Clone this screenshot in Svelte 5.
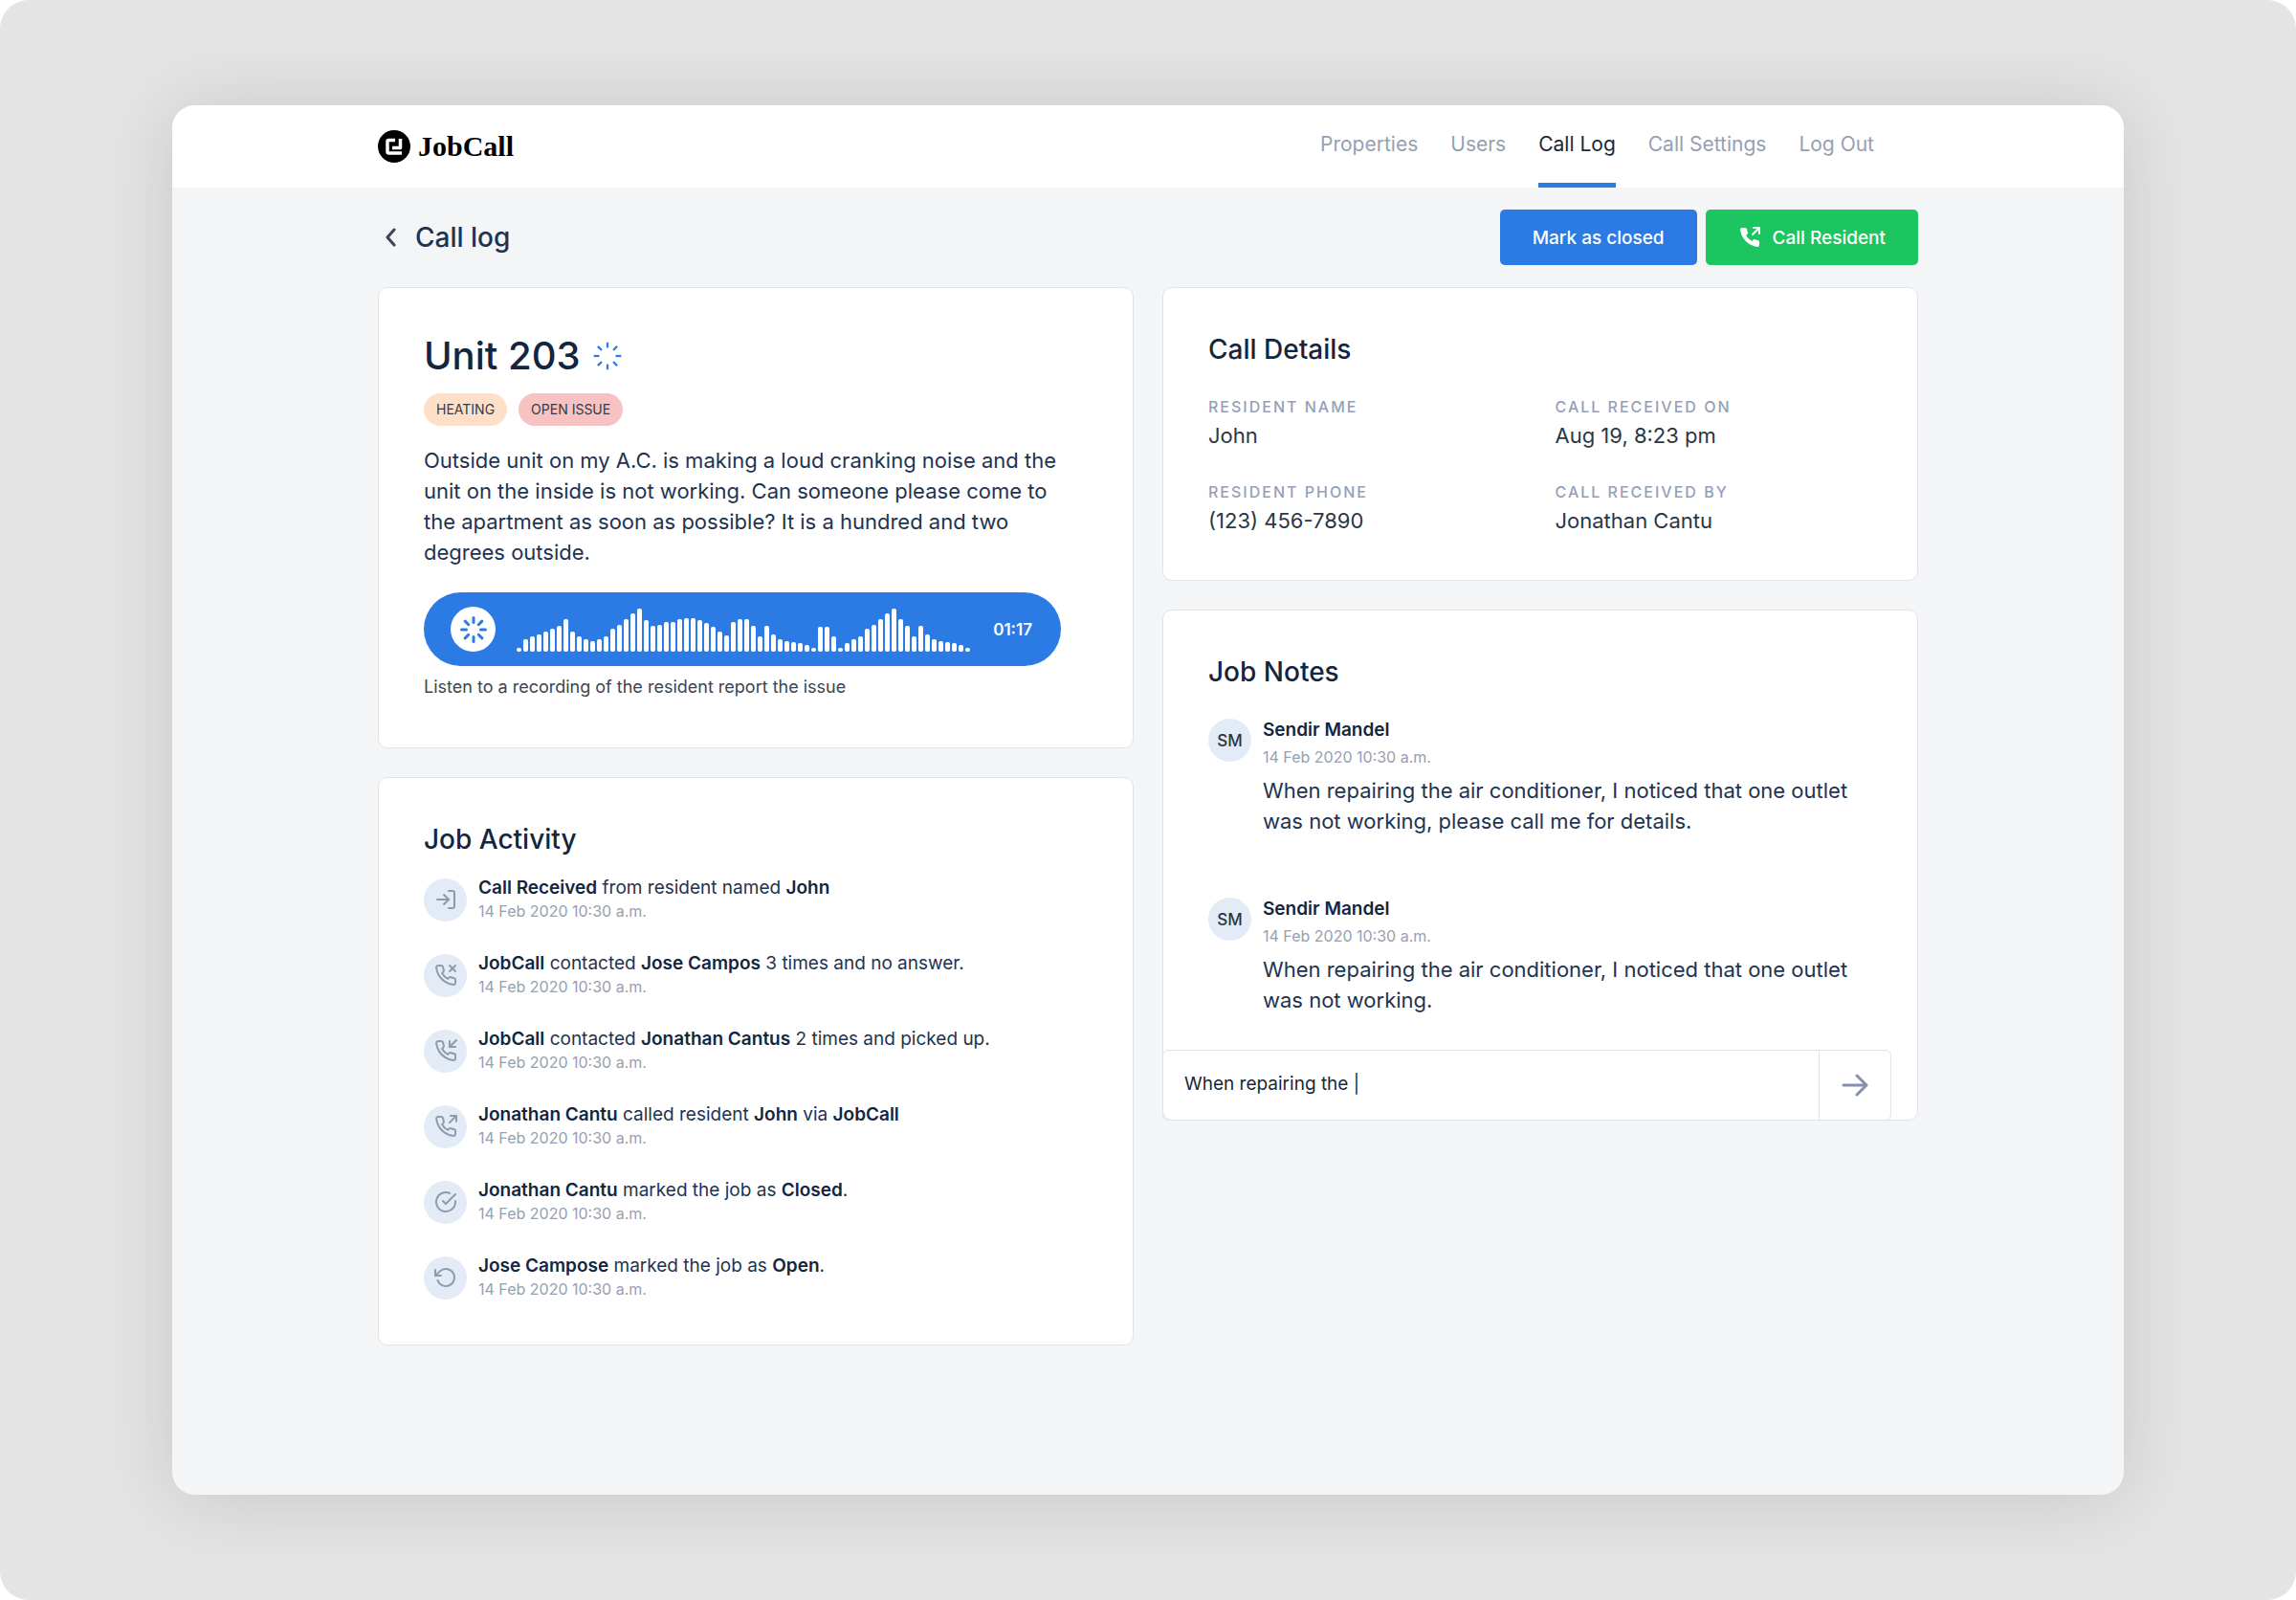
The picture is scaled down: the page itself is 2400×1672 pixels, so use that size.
<script>
  const phone =
    "M22 16.92v3a2 2 0 0 1-2.18 2 19.79 19.79 0 0 1-8.63-3.07 19.5 19.5 0 0 1-6-6 19.79 19.79 0 0 1-3.07-8.67A2 2 0 0 1 4.11 2h3a2 2 0 0 1 2 1.72 12.84 12.84 0 0 0 .7 2.81 2 2 0 0 1-.45 2.11L8.09 9.91a16 16 0 0 0 6 6l1.27-1.27a2 2 0 0 1 2.11-.45 12.84 12.84 0 0 0 2.81.7A2 2 0 0 1 22 16.92z";

  const icons = {
    received: ["M15 3h4a2 2 0 0 1 2 2v14a2 2 0 0 1-2 2h-4", "M10 17l5-5-5-5", "M15 12H3"],
    missed: [phone, "M22 2l-6 6", "M16 2l6 6"],
    incoming: [phone, "M16 2v6h6", "M23 1l-7 7"],
    outgoing: [phone, "M23 7V1h-6", "M16 8l7-7"],
    closed: ["M22 11.08V12a10 10 0 1 1-5.93-9.14", "M22 4L12 14.01l-3-3"],
    open: ["M1 4v6h6", "M3.51 15a9 9 0 1 0 2.13-9.36L1 10"],
  };

  let links = ["Properties", "Users", "Call Log", "Call Settings", "Log Out"];
  let current = "Call Log";

  let details = [
    { label: "Resident name", value: "John" },
    { label: "Call received on", value: "Aug 19, 8:23 pm" },
    { label: "Resident phone", value: "(123) 456-7890" },
    { label: "Call received by", value: "Jonathan Cantu" },
  ];

  // odd parts of each line are bold
  let activity = [
    { icon: "received", text: ["", "Call Received", " from resident named ", "John"] },
    { icon: "missed", text: ["", "JobCall", " contacted ", "Jose Campos", " 3 times and no answer."] },
    { icon: "incoming", text: ["", "JobCall", " contacted ", "Jonathan Cantus", " 2 times and picked up."] },
    { icon: "outgoing", text: ["", "Jonathan Cantu", " called resident ", "John", " via ", "JobCall"] },
    { icon: "closed", text: ["", "Jonathan Cantu", " marked the job as ", "Closed", "."] },
    { icon: "open", text: ["", "Jose Campose", " marked the job as ", "Open", "."] },
  ];
  let date = "14 Feb 2020 10:30 a.m.";

  let notes = [
    "When repairing the air conditioner, I noticed that one outlet was not working, please call me for details.",
    "When repairing the air conditioner, I noticed that one outlet was not working.",
  ];
  let draft = "When repairing the |";

  let bars = [
    4, 13, 16, 18, 21, 24, 27, 34, 21, 16, 13, 11, 13, 16, 24, 28, 34, 40, 45, 33,
    27, 28, 31, 31, 34, 35, 35, 33, 30, 26, 21, 17, 31, 34, 34, 27, 16, 27, 18, 13,
    11, 10, 9, 7, 4, 26, 26, 16, 4, 9, 13, 16, 24, 28, 34, 40, 45, 34, 27, 16, 27,
    18, 13, 11, 10, 9, 7, 4,
  ];
</script>

{#snippet spinner()}
  <svg class="spinner" viewBox="0 0 28 28" aria-hidden="true">
    {#each [0, 45, 90, 135, 180, 225, 270, 315] as angle}
      <path d="M14 1.5v5" transform="rotate({angle} 14 14)" />
    {/each}
  </svg>
{/snippet}

<div class="page">
  <div class="window">
    <header>
      <div class="container bar">
        <a class="logo" href="/">
          <svg viewBox="0 0 34 34" aria-hidden="true">
            <circle cx="17" cy="17" r="17" />
            <path d="M18 10.5H11.500a1.500 1.500 0 0 0-1.500 1.500v10.500a1.500 1.500 0 0 0 1.500 1.500H25" />
            <path d="M23.5 9v9.500H15" />
          </svg>
          <span>JobCall</span>
        </a>
        <nav>
          {#each links as link}
            <a href="/" class:active={link === current}>{link}</a>
          {/each}
        </nav>
      </div>
    </header>

    <main class="container">
      <div class="toolbar">
        <a class="back" href="/" aria-label="Back">
          <svg viewBox="0 0 12 20"><path d="M10 2L3 10l7 8" /></svg>
        </a>
        <h1>Call log</h1>
        <button class="btn blue">Mark as closed</button>
        <button class="btn green">
          <svg viewBox="0 0 24 24" aria-hidden="true">
            <path class="solid" d={phone} />
            <path d="M16 2h6v6M22 2l-7 7" />
          </svg>
          Call Resident
        </button>
      </div>

      <div class="columns">
        <div class="column">
          <section class="card">
            <div class="unit">
              <h2>Unit 203</h2>
              {@render spinner()}
            </div>
            <div class="tags">
              <span class="tag orange">HEATING</span>
              <span class="tag red">OPEN ISSUE</span>
            </div>
            <p class="issue">
              Outside unit on my A.C. is making a loud cranking noise and the unit on
              the inside is not working. Can someone please come to the apartment as
              soon as possible? It is a hundred and two degrees outside.
            </p>
            <div class="player">
              <button class="play" aria-label="Play recording">{@render spinner()}</button>
              <div class="wave">
                {#each bars as height}
                  <i style="height: {height}px"></i>
                {/each}
              </div>
              <span class="time">01:17</span>
            </div>
            <p class="caption">Listen to a recording of the resident report the issue</p>
          </section>

          <section class="card">
            <h3>Job Activity</h3>
            <ul class="activity">
              {#each activity as item}
                <li>
                  <span class="circle">
                    <svg viewBox="0 0 24 24" aria-hidden="true">
                      {#each icons[item.icon] as d}
                        <path {d} />
                      {/each}
                    </svg>
                  </span>
                  <div>
                    <p class="line">
                      {#each item.text as part, i}{#if i % 2}<b>{part}</b>{:else}{part}{/if}{/each}
                    </p>
                    <p class="date">{date}</p>
                  </div>
                </li>
              {/each}
            </ul>
          </section>
        </div>

        <div class="column">
          <section class="card">
            <h3>Call Details</h3>
            <dl>
              {#each details as item}
                <div>
                  <dt>{item.label}</dt>
                  <dd>{item.value}</dd>
                </div>
              {/each}
            </dl>
          </section>

          <section class="card notes">
            <div class="notes-body">
              <h3>Job Notes</h3>
              {#each notes as note}
                <article>
                  <span class="circle">SM</span>
                  <div>
                    <p class="line"><b>Sendir Mandel</b></p>
                    <p class="date">{date}</p>
                    <p class="note">{note}</p>
                  </div>
                </article>
              {/each}
            </div>
            <form class="composer" on:submit|preventDefault>
              <input type="text" aria-label="Add a note" bind:value={draft} />
              <button aria-label="Send note">
                <svg viewBox="0 0 28 24"><path d="M2 12h24M16 2l10 10-10 10" /></svg>
              </button>
            </form>
          </section>
        </div>
      </div>
    </main>
  </div>
</div>

<style>
  :global(body) {
    margin: 0;
    background: #fff;
  }

  * {
    box-sizing: border-box;
  }

  h1,
  h2,
  h3,
  p,
  ul,
  dl,
  dd {
    margin: 0;
    padding: 0;
  }

  a {
    text-decoration: none;
  }

  button,
  input {
    font-family: inherit;
    border: 0;
    padding: 0;
    background: none;
  }

  svg {
    display: block;
    flex: none;
    fill: none;
    stroke: currentColor;
    stroke-width: 2;
    stroke-linecap: round;
    stroke-linejoin: round;
  }

  .page {
    min-height: 100vh;
    padding: 110px 0;
    border-radius: 30px;
    background: #e4e4e4;
    color: #1e3350;
    font-family: Inter, "Liberation Sans", sans-serif;
  }

  .window {
    width: 85%;
    min-height: calc(100vh - 220px);
    margin: 0 auto;
    border-radius: 24px;
    overflow: hidden;
    background: #f3f5f7;
    box-shadow: 0 4px 80px rgba(0, 0, 0, 0.13);
  }

  .container {
    width: 100%;
    max-width: 1610px;
    margin: 0 auto;
  }

  header {
    background: #fff;
  }

  .bar {
    display: flex;
    align-items: center;
    justify-content: space-between;
  }

  .logo {
    display: flex;
    align-items: center;
    gap: 8px;
    color: #000;
    font-family: "Liberation Serif", serif;
    font-size: 30px;
    font-weight: 700;
  }

  .logo svg {
    width: 34px;
    height: 34px;
    stroke: #fff;
    stroke-width: 3.5;
    stroke-linecap: butt;
  }

  .logo circle {
    fill: #000;
    stroke: none;
  }

  nav {
    display: flex;
    gap: 34px;
    padding-right: 46px;
  }

  nav a {
    border-bottom: 5px solid transparent;
    color: #95a0b3;
    font-size: 21px;
    line-height: 81px;
  }

  nav a.active {
    border-color: #2c7be5;
    color: #1b2838;
  }

  .toolbar {
    display: flex;
    align-items: center;
    height: 104px;
  }

  .back {
    padding: 0 20px 0 7px;
    color: #3a4350;
  }

  .back svg {
    width: 12px;
    height: 20px;
    stroke-width: 3;
  }

  h1 {
    flex: 1;
    font-size: 28px;
    font-weight: 500;
  }

  .btn {
    display: flex;
    align-items: center;
    gap: 12px;
    height: 58px;
    padding: 0 34px;
    border-radius: 5px;
    color: #fff;
    font-size: 19px;
    font-weight: 500;
  }

  .btn svg {
    width: 24px;
    height: 24px;
  }

  .btn .solid {
    fill: currentColor;
    stroke: none;
  }

  .blue {
    margin-right: 9px;
    background: #2c7be5;
  }

  .green {
    background: #1cc560;
  }

  .columns {
    display: grid;
    grid-template-columns: 1fr 1fr;
    align-items: start;
    gap: 30px;
    padding-bottom: 60px;
  }

  .column {
    display: grid;
    gap: 30px;
  }

  .card {
    padding: 47px 47px 46px;
    border: 1px solid #e0e3e7;
    border-radius: 10px;
    background: #fff;
  }

  .unit {
    display: flex;
    align-items: center;
    gap: 12px;
    color: #2c7be5;
  }

  h2 {
    color: #12263f;
    font-size: 40px;
    font-weight: 500;
    line-height: 48px;
  }

  h3 {
    color: #12263f;
    font-size: 28px;
    font-weight: 500;
    line-height: 34px;
  }

  .spinner {
    width: 32px;
    height: 32px;
    stroke-linecap: butt;
  }

  .tags {
    display: flex;
    gap: 12px;
    margin-top: 15px;
  }

  .tag {
    padding: 0 13px;
    border-radius: 17px;
    color: #333b47;
    font-size: 14px;
    line-height: 34px;
  }

  .orange {
    background: #ffdfc8;
  }

  .red {
    background: #f8c2c3;
  }

  .issue {
    max-width: 666px;
    margin-top: 20px;
    font-size: 22px;
    line-height: 32px;
  }

  .player {
    display: flex;
    align-items: center;
    max-width: 666px;
    height: 77px;
    margin-top: 26px;
    padding: 0 30px 0 28px;
    border-radius: 39px;
    background: #2c7be5;
    color: #fff;
  }

  .play {
    display: grid;
    place-items: center;
    width: 47px;
    height: 47px;
    border-radius: 50%;
    background: #fff;
    color: #2c7be5;
  }

  .play .spinner {
    width: 28px;
    height: 28px;
    stroke-width: 3;
    stroke-linecap: round;
  }

  .wave {
    display: flex;
    align-items: flex-end;
    gap: 2px;
    height: 47px;
    margin: 0 auto 0 22px;
  }

  .wave i {
    width: 5px;
    border-radius: 2px;
    background: #fff;
  }

  .time {
    font-size: 17px;
    font-weight: 600;
  }

  .caption {
    margin: 10px 0 5px;
    color: #3b4450;
    font-size: 18px;
    line-height: 24px;
  }

  .activity {
    display: grid;
    gap: 31px;
    margin-top: 22px;
    list-style: none;
  }

  .activity li {
    display: flex;
    align-items: center;
    gap: 12px;
  }

  .circle {
    display: grid;
    flex: none;
    place-items: center;
    width: 45px;
    height: 45px;
    border-radius: 50%;
    background: #e3ebf6;
    color: #8f9aac;
  }

  .activity svg {
    width: 24px;
    height: 24px;
  }

  .line {
    font-size: 19px;
    line-height: 24px;
  }

  b {
    color: #12263f;
    font-weight: 600;
  }

  .date {
    color: #95a0b3;
    font-size: 16px;
    line-height: 24px;
  }

  dl {
    display: grid;
    grid-template-columns: 1fr 1fr;
    gap: 31px;
    margin-top: 31px;
  }

  dt {
    margin-bottom: 2px;
    color: #95a0b8;
    font-size: 16px;
    font-weight: 500;
    letter-spacing: 2px;
    line-height: 24px;
    text-transform: uppercase;
  }

  dd {
    color: #2c3644;
    font-size: 22px;
    line-height: 32px;
  }

  .notes {
    padding: 0;
  }

  .notes-body {
    padding: 47px 47px 36px;
  }

  article {
    display: flex;
    gap: 12px;
    margin-top: 64px;
  }

  h3 + article {
    margin-top: 32px;
  }

  article .circle {
    color: #2c3644;
    font-size: 17px;
    font-weight: 500;
  }

  article .date {
    margin-top: 4px;
  }

  .note {
    margin-top: 7px;
    font-size: 22px;
    line-height: 32px;
  }

  .composer {
    display: flex;
    height: 74px;
    margin: 0 27px -1px -1px;
    border: 1px solid #e0e3e7;
    border-radius: 6px;
  }

  .composer input {
    flex: 1;
    min-width: 0;
    padding: 0 22px 4px;
    color: #1b2838;
    font-size: 19px;
    outline: 0;
  }

  .composer button {
    display: grid;
    place-items: center;
    width: 75px;
    border-left: 1px solid #e0e3e7;
    color: #8690ab;
  }

  .composer svg {
    width: 28px;
    height: 24px;
    stroke-width: 3;
  }
</style>
